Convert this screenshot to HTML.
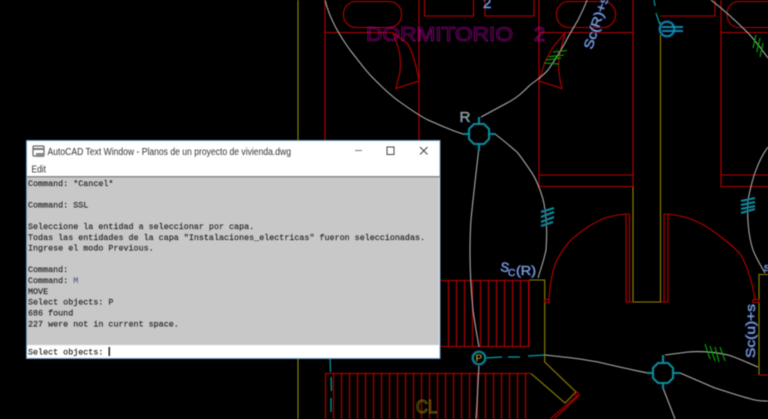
<!DOCTYPE html>
<html><head><meta charset="utf-8"><style>
html,body{margin:0;padding:0;width:768px;height:419px;background:#000;overflow:hidden}
svg{display:block;position:absolute;left:0;top:0;filter:blur(.4px)}
.r{stroke:#b80000;stroke-width:1.100;fill:none}
.rd{stroke:#a80000;stroke-width:1.250;fill:none}
.y{stroke:#8f8500;stroke-width:1.100;fill:none}
.w{stroke:#b0b0b0;stroke-width:1.050;fill:none}
.t{stroke:#00a0a0;stroke-width:1.200;fill:none}
.g{stroke:#00b000;stroke-width:1.100;fill:none}
.m{font-family:"Liberation Mono",monospace;font-size:8.4px;fill:#222;stroke:#222;stroke-width:.15}
.u{font-family:"Liberation Sans",sans-serif;font-size:10px;fill:#333}
.lb{font-family:"Liberation Sans",sans-serif;fill:#8ea2b4;stroke:#1c3f9c;stroke-width:1;paint-order:stroke}
.lbt{font-family:"Liberation Sans",sans-serif}
</style></head><body>
<svg width="768" height="419" viewBox="0 0 768 419" xmlns="http://www.w3.org/2000/svg">
<!-- yellow -->
<path class="y" d="M298 0V140M298 359V419M633 187V302H660.500V22M544.700 355V280H529M544.700 355V362L576 392L565 403L531 373.500M759 375V274.500H768"/>
<!-- red top -->
<path class="r" d="M325 0V140M419 0V140M325 32.500H392M424.500 0V16H473.500V0M485 0V16H534V0M539 0V186.500H633V0M539 32.500H633M539 175H633M660.500 16H715V0M721 0V186.500H768M721 32.500H768M721 175H768"/>
<rect class="r" x="343.500" y="1.500" width="58" height="26" rx="12.500"/>
<rect class="r" x="556.500" y="1.500" width="59" height="26" rx="12.500"/>
<path class="r" d="M768 1.500H739C731 1.500 727 8 727 14.500C727 21 731 27.500 739 27.500H768"/>
<path class="r" d="M393 33L407 43C412 50 417 67 419 81L396 88.500L400 72C401 62 400 55 399 50Z"/>
<path class="r" d="M565 33L553 47L545 62L539 81L562 88.500C559 78 558 68 559 57Z"/>
<!-- arcs lower -->
<path class="r" d="M629 214C620 214 612 216 605 218C592 223 580 232 571 240C564 247 560 254 556 262C552 272 550 285 549 299"/>
<path class="r" d="M664 214C673 214 681 216 688 218C700 222 711 229 721 237C729 243 736 249 741 255C748 268 753 285 755 300"/>
<path class="r" d="M626 214V302H633M629.500 214V302M668 214V302H660.500M664 214V302M545 299.500H549V302.500H545ZM753 299.500H759V302.500H753Z"/>
<path class="r" d="M759 375H768"/>
<rect x="528" y="280" width="1.300" height="66" fill="#c00000"/>
<!-- hatch 1 -->
<path class="rd" d="M441 280.500H529V346.500H441M448.500 280V346M456.500 280V346M464.500 280V346M472.500 280V346M480.500 280V346M488.500 280V346M496.500 280V346M504.500 280V346M512.500 280V346M520.500 280V346"/>
<!-- hatch 2 -->
<path class="rd" d="M325.500 419V373.500H531M333.500 373.500V419M341.500 373.500V419M349.500 373.500V419M357.500 373.500V419M365.500 373.500V419M373.500 373.500V419M381.500 373.500V419M389.500 373.500V419M397.500 373.500V419M405.500 373.500V419M413.500 373.500V419M421.500 373.500V419M429.500 373.500V419M437.500 373.500V419M445.500 373.500V419M453.500 373.500V419M461.500 373.500V419M469.500 373.500V419M477.500 373.500V419M485.500 373.500V419M493.500 373.500V419M501.500 373.500V419M509.500 373.500V419M517.500 373.500V419M525.500 373.500V419"/>
<path class="r" d="M576 391L579.500 395L554 419M573 392.500L577 396L550 419"/>
<!-- white curves -->
<path class="w" d="M325 0C330 20 340 36 350 50C358 60 365 70 372 77C382 87 390 95 400 102C410 109 418 115 428 120C440 125 450 130 463 134"/>
<path class="w" d="M481 117L507 103C517 98 523 92 530 85C538 79 543 76 548 70C555 60 560 52 565 43C570 33 574 27 578 20C582 12 585 6 587 0"/>
<path class="w" d="M495 134C503 140 510 146 517 152C522 158 525 163 530 170C533 174 536 180 538 185C541 192 544 200 545 210C547 225 547 235 546 250C544 260 541 268 538 278"/>
<path class="w" d="M479 147C477 165 474 190 472 210C470 225 470 240 470 253C470 270 471 290 473 310C475 325 477 335 479 347"/>
<path class="w" d="M479 364C478 385 477 405 476 419"/>
<path class="w" d="M545 355C565 357 582 359 598 362C615 366 632 370 648 373"/>
<path class="w" d="M665 355L688 352C700 351 715 352 728 355C738 358 748 363 758 367"/>
<path class="w" d="M680 373C692 378 703 383 715 388C728 392 742 397 755 400C760 401 765 401 768 401"/>
<path class="w" d="M663 388L675 419"/>
<path class="w" d="M711 0C724 10 737 22 748 33C755 40 762 50 768 58"/>
<path class="w" d="M768 147C762 155 759 162 756 170C752 180 750 190 748 200C747 215 748 235 753 250C756 258 761 266 765 273"/>
<!-- teal -->
<path class="t" d="M484 358L502 357M508 357H520M528 356L545 355"/>
<path class="t" d="M330 359L330.500 372M331 377L331.500 391M331 398L331 412M654 0L655 6M656 13L661 28"/>
<!-- green ticks -->
<path class="g" d="M553 52L567 50.500M549 56.700L564 55M546 60L561 58M544 63L559 64"/>
<path class="g" d="M756 35L753 48M760 38L756.700 52M763 43L760 57"/>
<path class="g" d="M705 344L710 359M710 346L715 361M715 347L719 362M720 347L725 361"/>
<!-- glow symbols -->
<g stroke="#163f80" stroke-width="2.600" fill="none">
<path d="M541 212L554 208M541 217L554 212M541 222L554 217M541 226L553 222"/>
<path d="M741 201L755 198M741 205L755 202M741 209L755 206M741 213L755 209"/>
<polygon points="474,124 484,124 489,129 489,139 484,144 474,144 469,139 469,129"/>
<polygon points="658,363 668,363 673,368 673,378 668,383 658,383 653,378 653,368"/>
<circle cx="479" cy="358" r="6.500"/><circle cx="667" cy="29" r="7.500"/>
<path d="M662 27H683M662 31H683M469 134H463M489 134H495M479 124V117M479 144V151M653 373H647M673 373H680M663 363V355M663 383V389"/>
</g>
<g stroke="#00b880" stroke-width="1.050" fill="none">
<path d="M541 212L554 208M541 217L554 212M541 222L554 217M541 226L553 222"/>
<path d="M741 201L755 198M741 205L755 202M741 209L755 206M741 213L755 209"/>
<polygon points="474,124 484,124 489,129 489,139 484,144 474,144 469,139 469,129"/>
<polygon points="658,363 668,363 673,368 673,378 668,383 658,383 653,378 653,368"/>
<circle cx="479" cy="358" r="6"/>
<path d="M653 373H647M673 373H680M663 363V355M663 383V389M469 134H463M489 134H495M479 124V117M479 144V151"/>
</g>
<g stroke="#00b0b0" stroke-width="1.050" fill="none"><circle cx="667" cy="29" r="7"/><path d="M662 27H683M662 31H683"/></g>
<!-- labels -->
<text x="366" y="41" class="lbt" font-size="20" fill="none" stroke="#b400a4" stroke-width=".6" textLength="147" lengthAdjust="spacingAndGlyphs">DORMITORIO</text>
<text x="534" y="41" class="lbt" font-size="20" fill="none" stroke="#c800b8" stroke-width=".6">2</text>
<text x="416" y="413" class="lbt" font-size="18" fill="none" stroke="#8f8500" stroke-width=".7" textLength="21" lengthAdjust="spacingAndGlyphs">CL</text>
<text x="459.500" y="122" class="lb" font-size="15" style="fill:#a8a870" textLength="11" lengthAdjust="spacingAndGlyphs">R</text>
<text x="475.500" y="361.500" class="lb" font-size="10" style="fill:#c8b840;stroke:none">P</text>
<text x="483" y="8" class="lb" font-size="15">2</text>
<text class="lb" font-size="13" transform="translate(500,271) rotate(8)">S</text>
<text class="lb" font-size="10" x="508" y="276">C</text>
<text class="lb" font-size="13" x="516" y="275" textLength="20" lengthAdjust="spacingAndGlyphs">(R)</text>
<text class="lb" font-size="13" transform="translate(592,50) rotate(-72)" textLength="55" lengthAdjust="spacingAndGlyphs">Sc(R)+s</text>
<text class="lb" font-size="13" transform="translate(755,358) rotate(-90)" textLength="54" lengthAdjust="spacingAndGlyphs">Sc(u)+s</text>
<text class="lb" font-size="11" x="764" y="271">s</text>
<!-- window -->
<rect x="26.500" y="140.500" width="413.500" height="218" fill="#fff" stroke="#6f9dc4"/>
<rect x="27" y="176" width="412.500" height="1.500" fill="#8c8c8c"/>
<rect x="27" y="177.500" width="412" height="167" fill="#c8c8c8"/>
<rect x="27" y="344.500" width="412" height=".8" fill="#d8d8d8"/>
<rect x="33" y="146" width="11" height="10" rx="1" fill="none" stroke="#666" stroke-width="1.200"/>
<rect x="33" y="148" width="11" height="2" fill="#777"/>
<rect x="36" y="153" width="8" height="4" fill="#888"/>
<text class="u" x="47.500" y="155" textLength="243.500" lengthAdjust="spacingAndGlyphs">AutoCAD Text Window - Planos de un proyecto de vivienda.dwg</text>
<text class="u" x="31.500" y="172.500" font-size="9.500" textLength="14.500" lengthAdjust="spacingAndGlyphs">Edit</text>
<path d="M355 150.500H362" stroke="#777" stroke-width="1"/>
<rect x="387" y="147" width="7" height="7.500" fill="none" stroke="#444"/>
<path d="M420 147L427.500 154.500M427.500 147L420 154.500" stroke="#444" stroke-width="1"/>
<text class="m" x="28" y="186">Command: *Cancel*</text>
<text class="m" x="28" y="207.500">Command: SSL</text>
<text class="m" x="28" y="229">Seleccione la entidad a seleccionar por capa.</text>
<text class="m" x="28" y="240">Todas las entidades de la capa "Instalaciones_electricas" fueron seleccionadas.</text>
<text class="m" x="28" y="250.500">Ingrese el modo Previous.</text>
<text class="m" x="28" y="272">Command:</text>
<text class="m" x="28" y="283">Command: <tspan fill="#55657a" stroke="#55657a">M</tspan></text>
<text class="m" x="28" y="294">MOVE</text>
<text class="m" x="28" y="304.500">Select objects: P</text>
<text class="m" x="28" y="315.500">686 found</text>
<text class="m" x="28" y="326.500">227 were not in current space.</text>
<text class="m" x="28" y="354.500">Select objects:</text>
<rect x="108.500" y="347" width="1.500" height="9" fill="#222"/>
</svg>
</body></html>
